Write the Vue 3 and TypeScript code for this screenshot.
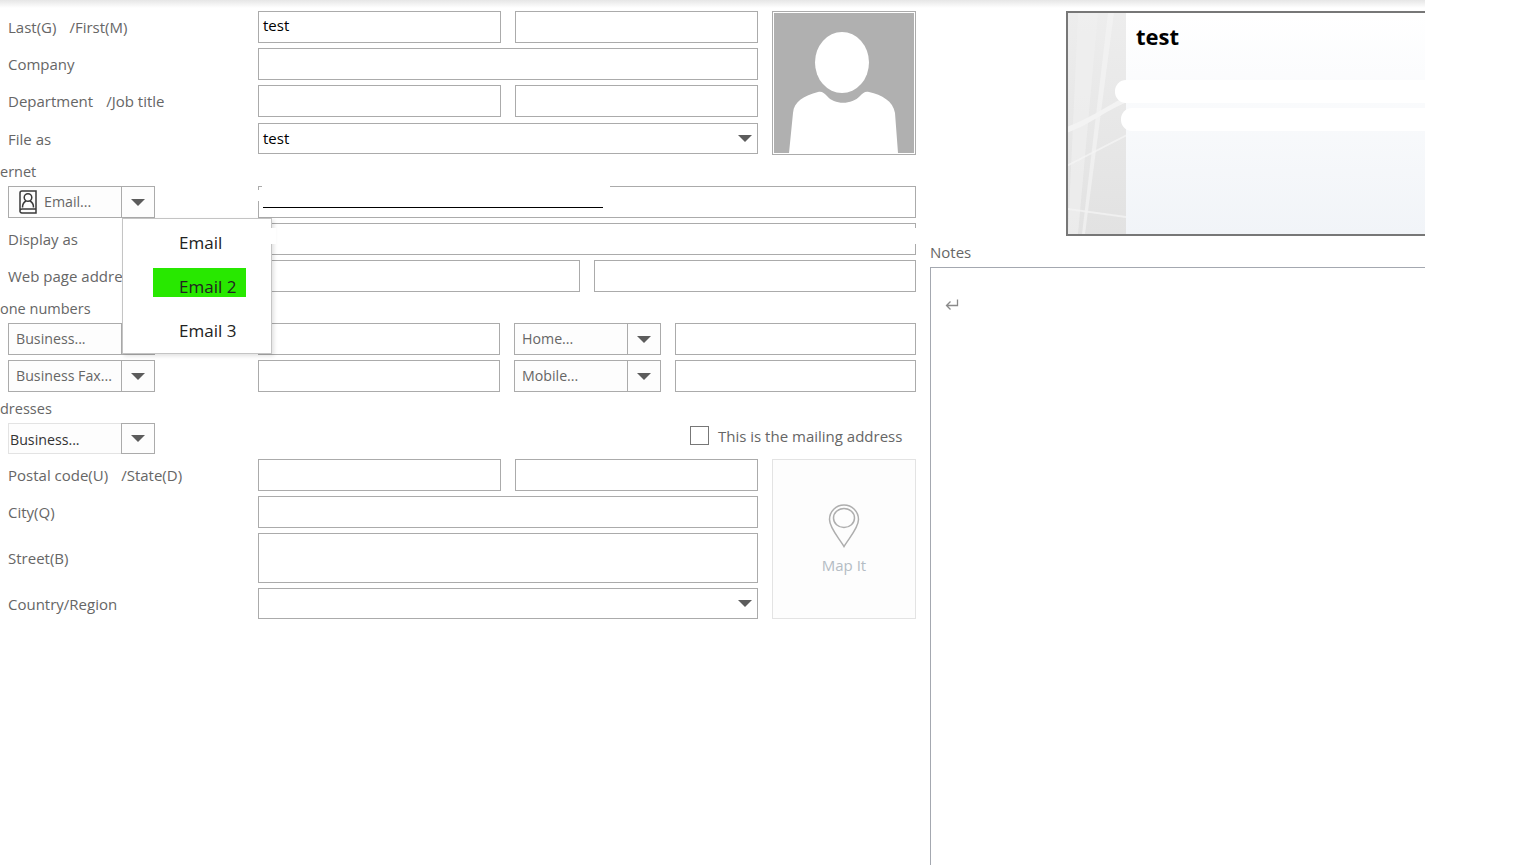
<template>
  <div class="page">
    <div class="top-shade"></div>
    <div class="main">
      <div class="form">
        <div class="block">
          <div class="rows">
            <div class="row">
              <label class="lbl"><span class="pair">Last(G)</span><span>/First(M)</span></label>
              <div class="input half val">test</div>
              <div class="input half"></div>
            </div>
            <div class="row">
              <label class="lbl">Company</label>
              <div class="input grow"></div>
            </div>
            <div class="row">
              <label class="lbl"><span class="pair">Department</span><span>/Job title</span></label>
              <div class="input half"></div>
              <div class="input half"></div>
            </div>
            <div class="row short file-as">
              <label class="lbl">File as</label>
              <div class="input grow val select">test<i class="tri"></i></div>
            </div>
          </div>
          <div class="photo">
            <svg viewBox="0 0 140 140" width="138" height="140">
              <rect width="140" height="140" fill="#b0b0b0" />
              <ellipse cx="68" cy="49.500" rx="27" ry="30.500" fill="#fff" />
              <path d="M15 140 L19 100 C20 88 30 83 44 79 C48 78 50 80 53 83 C60 92 78 92 86 83 C89 80 91 78 95 79 C108 82 119 88 121 100 L124 140 Z" fill="#fff" />
            </svg>
          </div>
        </div>

        <div class="section">ernet</div>
        <div class="row">
          <label class="lbl">
            <div class="pick">
              <span class="pick-text">
                <svg class="book" viewBox="0 0 18 24" width="18" height="24" fill="none" stroke="#3a3a3a" stroke-width="1.500">
                  <path d="M1 20.500V3a2 2 0 0 1 2-2h14v22H3a2 2 0 0 1-2-2.500a2 2 0 0 1 2-1.500h14" />
                  <circle cx="9" cy="7.500" r="3.800" />
                  <path d="M3.500 17.500c0-3.500 1.500-5.500 3.500-6.500M14.500 17.500c0-3.500-1.500-5.500-3.500-6.500" />
                </svg>Email...
              </span>
              <button class="arrow"><i class="tri"></i></button>
            </div>
          </label>
          <div class="input wide email-field">
            <div class="ink-mask"></div>
            <span class="ink-line"></span>
          </div>
        </div>
        <div class="row">
          <label class="lbl">Display as</label>
          <div class="input wide display-field"></div>
        </div>
        <div class="row">
          <label class="lbl">Web page address</label>
          <div class="input web"></div>
          <div class="input web"></div>
        </div>

        <div class="section">one numbers</div>
        <div class="row">
          <label class="lbl">
            <div class="pick"><span class="pick-text">Business...</span><button class="arrow"><i class="tri"></i></button></div>
          </label>
          <div class="input phone"></div>
          <div class="pick"><span class="pick-text">Home...</span><button class="arrow"><i class="tri"></i></button></div>
          <div class="input phone2"></div>
        </div>
        <div class="row">
          <label class="lbl">
            <div class="pick"><span class="pick-text">Business Fax...</span><button class="arrow"><i class="tri"></i></button></div>
          </label>
          <div class="input phone"></div>
          <div class="pick"><span class="pick-text">Mobile...</span><button class="arrow"><i class="tri"></i></button></div>
          <div class="input phone2"></div>
        </div>

        <div class="section">dresses</div>
        <div class="row short mail-row">
          <label class="lbl">
            <div class="pick light"><span class="pick-text">Business...</span><button class="arrow"><i class="tri"></i></button></div>
          </label>
          <div class="mailing"><span class="check"></span>This is the mailing address</div>
        </div>
        <div class="block addr">
          <div class="rows">
            <div class="row">
              <label class="lbl"><span class="pair">Postal code(U)</span><span>/State(D)</span></label>
              <div class="input half"></div>
              <div class="input half"></div>
            </div>
            <div class="row">
              <label class="lbl">City(Q)</label>
              <div class="input grow"></div>
            </div>
            <div class="row tall">
              <label class="lbl">Street(B)</label>
              <div class="input grow"></div>
            </div>
            <div class="row short">
              <label class="lbl low">Country/Region</label>
              <div class="input grow select"><i class="tri"></i></div>
            </div>
          </div>
          <div class="map">
            <svg viewBox="0 0 32 44" width="32" height="44" fill="none" stroke="#aeaeae" stroke-width="1.500">
              <path d="M16 42.500 C11 34 1.500 24 1.500 15.500 a14.500 14.500 0 0 1 29 0 C30.500 24 21 34 16 42.500 Z" />
              <ellipse cx="16" cy="14" rx="10.500" ry="9.500" />
            </svg>
            <span>Map It</span>
          </div>
        </div>
      </div>

      <div class="side">
        <div class="card">
          <svg class="card-art" viewBox="0 0 58 222" width="58" height="222" preserveAspectRatio="none">
            <defs>
              <linearGradient id="artBase" x1="0" y1="0" x2="0" y2="1">
                <stop offset="0" stop-color="#ededed" />
                <stop offset="1" stop-color="#e2e2e2" />
              </linearGradient>
            </defs>
            <rect width="58" height="222" fill="url(#artBase)" />
            <g class="streaks">
              <path d="M10 0 L0 222 L10 222 L30 0 Z" fill="#f0f0f0" opacity="0.7" />
              <path d="M40 0 L14 222 L17 222 L46 0 Z" fill="#f4f4f4" opacity="0.7" />
              <path d="M0 114 C22 106 38 94 58 84 L58 90 C38 98 22 112 0 120 Z" fill="#f3f3f3" />
              <path d="M0 152 L58 122 L58 124 L0 154 Z" fill="#f4f4f4" opacity="0.8" />
              <path d="M0 196 L58 204 L58 206 L0 198 Z" fill="#f2f2f2" opacity="0.8" />
            </g>
          </svg>
          <div class="card-body">
            <div class="card-name">test</div>
          </div>
          <div class="pill p1"></div>
          <div class="pill p2"></div>
        </div>
        <div class="notes-label">Notes</div>
        <div class="notes">
          <svg viewBox="0 0 14 14" width="14" height="14" fill="none" stroke="#8a8a8a" stroke-width="1.300">
            <path d="M12.500 1.500V7.500H1.500M5.500 3.500L1.500 7.500L5.500 11.500" />
          </svg>
        </div>
      </div>
    </div>

    <div class="menu">
      <div v-for="item in emailItems" :key="item" class="menu-item" :class="{ active: item === activeItem }">{{ item }}</div>
    </div>
  </div>
</template>

<script setup lang="ts">
const emailItems: string[] = ['Email', 'Email 2', 'Email 3'];
const activeItem = 'Email 2';
</script>

<style>
html, body { margin: 0; background: #fff; overflow: hidden; }
</style>

<style scoped>
.page {
  position: relative;
  width: 1514px;
  height: 865px;
  overflow: hidden;
  background: #fff;
  font-family: "Open Sans", "Noto Sans", sans-serif;
  font-size: 15px;
  color: #666;
}

.top-shade {
  position: absolute;
  top: 0;
  left: 0;
  width: 1425px;
  height: 8px;
  background: linear-gradient(#e6e6e6, #fff);
}

.main {
  display: flex;
  width: 1425px;
  height: 865px;
  overflow: hidden;
  padding-top: 11px;
  box-sizing: border-box;
}

.form { width: 916px; flex-shrink: 0; }

.block { display: flex; gap: 14px; }
.rows { width: 758px; display: flex; flex-direction: column; gap: 5px; }

.row { display: flex; height: 32px; box-sizing: border-box; }
.row + .row { margin-top: 5px; }
.rows .row + .row { margin-top: 0; }
.rows .row + .row.file-as { margin-top: 1px; }
.row.short { height: 31px; }
.row.tall { height: 50px; }

.lbl {
  width: 258px;
  flex-shrink: 0;
  padding-left: 8px;
  box-sizing: border-box;
  display: flex;
  align-items: center;
  white-space: nowrap;
  overflow: hidden;
}
.lbl.low { padding-top: 1px; }
.pair { margin-right: 13px; }

.input {
  border: 1px solid #ababab;
  box-sizing: border-box;
  height: 100%;
  background: #fff;
  position: relative;
}
.val { color: #000; padding-left: 4px; line-height: 27px; }
.file-as .val { line-height: 28px; }
.half { width: 243px; }
.half + .half { margin-left: 14px; }
.grow { flex: 1; }
.wide { width: 658px; }
.web { width: 322px; }
.web + .web { margin-left: 14px; }
.phone { width: 242px; margin-right: 14px; }
.phone2 { width: 241px; margin-left: 14px; }

.select .tri { position: absolute; right: 5px; top: 11px; }

.tri {
  display: block;
  width: 0;
  height: 0;
  border-left: 7.500px solid transparent;
  border-right: 7.500px solid transparent;
  border-top: 7px solid #5c5c5c;
}

.photo {
  width: 144px;
  height: 144px;
  border: 1px solid #ababab;
  box-sizing: border-box;
  padding: 1px;
}
.photo svg { display: block; width: 100%; height: 100%; }

.section { height: 31px; line-height: 33px; white-space: nowrap; font-size: 14.500px; }

.pick { display: flex; height: 32px; width: 147px; flex-shrink: 0; }
.row.short .pick { height: 31px; }
.pick-text {
  width: 114px;
  box-sizing: border-box;
  border: 1px solid #ababab;
  padding: 0 0 1px 7px;
  display: flex;
  align-items: center;
  background: #fdfdfd;
  white-space: nowrap;
  overflow: hidden;
  font-size: 14.200px;
}
.arrow {
  width: 34px;
  margin-left: -1px;
  padding: 0;
  box-sizing: border-box;
  border: 1px solid #ababab;
  background: #fdfdfd;
  display: flex;
  align-items: center;
  justify-content: center;
}
.book { margin: 0 7px 0 3px; }
.light .pick-text { border-color: #e3e3e3; padding: 1px 0 0 1px; color: #333; }

.ink-mask {
  position: absolute;
  left: -1px;
  top: -1px;
  width: 352px;
  height: 15px;
  background: #fff;
  clip-path: polygon(4px 0, 100% 0, 100% 100%, 0 100%, 0 4px, 4px 4px);
}
.ink-line {
  position: absolute;
  left: 4px;
  top: 20px;
  width: 340px;
  height: 1px;
  background: #000;
}
.display-field::after {
  content: "";
  position: absolute;
  right: -1px;
  top: 4px;
  width: 2px;
  height: 16px;
  background: #fff;
}

.mailing {
  margin-left: 432px;
  display: flex;
  align-items: center;
  white-space: nowrap;
  padding-bottom: 6px;
  box-sizing: border-box;
}
.check {
  width: 19px;
  height: 19px;
  box-sizing: border-box;
  border: 1px solid #777;
  margin-right: 9px;
}

.addr { margin-top: 5px; }
.map {
  width: 144px;
  height: 160px;
  box-sizing: border-box;
  border: 1px solid #e3e3e3;
  background: #fdfdfd;
  display: flex;
  flex-direction: column;
  align-items: center;
  padding-top: 44px;
  color: #b4bcc4;
}
.map span { margin-top: 7px; }

.side { margin-left: 14px; width: 495px; flex-shrink: 0; }

.card {
  position: relative;
  margin-left: 136px;
  width: 380px;
  height: 225px;
  box-sizing: border-box;
  border: 2px solid #777;
  display: flex;
  background: linear-gradient(#fff, #f1f4f8);
}
.card-art { display: block; flex-shrink: 0; width: 58px; height: 100%; }
.streaks { filter: blur(0.7px); }
.card-body { flex: 1; padding: 8px 10px; }
.card-name { font-size: 22px; font-weight: 700; color: #000; line-height: 30px; }
.pill {
  position: absolute;
  right: 0;
  height: 23px;
  border-radius: 11px 0 0 11px;
  background: #fff;
}
.p1 { left: 47px; top: 67px; }
.p2 { left: 53px; top: 95px; }

.notes-label { margin-top: 4px; height: 27px; line-height: 24px; }
.notes {
  height: 700px;
  border-top: 1px solid #a4a8b0;
  border-left: 1px solid #a4a8b0;
  padding: 30px 0 0 14px;
  box-sizing: border-box;
}
.notes svg { display: block; }

.menu {
  position: absolute;
  left: 122px;
  top: 218px;
  width: 150px;
  height: 136px;
  box-sizing: border-box;
  border: 1px solid #c4c4c4;
  background: #fff;
  box-shadow: 2px 2px 4px rgba(0, 0, 0, 0.12);
  color: #222;
  font-size: 17px;
  padding-top: 5px;
}
.menu::after {
  content: "";
  position: absolute;
  right: -5px;
  top: 9px;
  width: 6px;
  height: 16px;
  background: #fff;
}
.menu-item {
  height: 29px;
  line-height: 37px;
  margin: 0 25px 15px 30px;
  padding-left: 26px;
  white-space: nowrap;
}
.menu-item.active { background: #28e800; }
</style>
